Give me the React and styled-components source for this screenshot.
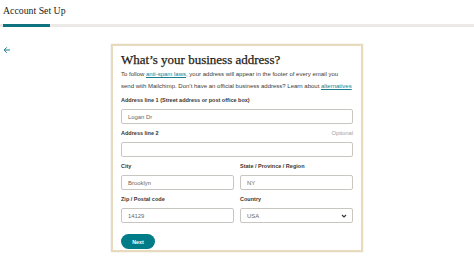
import React from "react";
import styled, { createGlobalStyle } from "styled-components";

const Global = createGlobalStyle`
  html, body { margin: 0; padding: 0; background: #fff; }
  body { font-family: "Liberation Sans", Arial, sans-serif; color: #241c15; }
  * { box-sizing: border-box; }
`;

const Page = styled.div`
  width: 474px;
  height: 257px;
  overflow: hidden;
  display: flex;
  flex-direction: column;
`;

const Header = styled.div`
  height: 24px;
  padding: 5px 0 0 3px;
  font-family: "Liberation Serif", "Times New Roman", serif;
  font-size: 9.8px;
  line-height: 12px;
  color: #241c15;
`;

const Progress = styled.div`
  height: 3px;
  background: #eceae6;
  display: flex;
`;

const ProgressFill = styled.div`
  width: 47px;
  margin-left: 3px;
  height: 100%;
  background: #0f7480;
`;

const Body = styled.div`
  display: flex;
  padding-top: 17px;
`;

const BackCol = styled.div`
  width: 111px;
  padding-left: 3px;
  margin-top: -4px;
  color: #1b7d89;
`;

const Card = styled.div`
  width: 252px;
  height: 208px;
  border: 2px solid #e8dbbd;
  box-shadow: 0 0 1px rgba(180, 160, 120, 0.5);
  padding: 5px 8px 0 8px;
  display: flex;
  flex-direction: column;
`;

const Title = styled.h1`
  margin: 0;
  font-family: "Liberation Serif", "Times New Roman", serif;
  font-weight: 400;
  font-size: 13px;
  line-height: 18px;
  color: #241c15;
  -webkit-text-stroke: 0.25px #241c15;
`;

const Intro = styled.p`
  margin: -1px 0 0;
  font-size: 6px;
  line-height: 12px;
  color: #403b36;
  white-space: nowrap;
`;

const Link = styled.a`
  color: #1b7d89;
  text-decoration: underline;
`;

const Grid = styled.div`
  display: grid;
  grid-template-columns: 1fr 1fr;
  column-gap: 6px;
  row-gap: 4px;
  margin-top: 3px;
`;

const Field = styled.div`
  grid-column: ${(p) => (p.$full ? "1 / span 2" : "auto")};
  display: flex;
  flex-direction: column;
`;

const LabelRow = styled.div`
  display: flex;
  justify-content: space-between;
  align-items: center;
  height: 10px;
  margin-bottom: 4px;
`;

const Label = styled.span`
  font-size: 5.5px;
  font-weight: 700;
  color: #3a352f;
`;

const Optional = styled.span`
  font-size: 5.8px;
  color: #a6a19b;
`;

const Input = styled.div`
  height: 15px;
  border: 1px solid #c9c6c2;
  border-radius: 2px;
  padding: 0 6px;
  display: flex;
  align-items: center;
  justify-content: space-between;
  font-size: 5.9px;
  color: #6d6862;
  background: #fff;
`;

const Chevron = styled.svg`
  width: 6px;
  height: 6px;
  margin-right: -1px;
`;

const Button = styled.button`
  margin-top: 11px;
  flex-shrink: 0;
  width: 34px;
  height: 15px;
  border: none;
  border-radius: 8px;
  background: #007c89;
  color: #fff;
  font-family: "Liberation Sans", Arial, sans-serif;
  font-size: 5.3px;
  font-weight: 700;
  padding: 0;
  align-self: flex-start;
`;

const fields = [
  { label: "Address line 1 (Street address or post office box)", value: "Logan Dr", full: true },
  { label: "Address line 2", value: "", full: true, optional: true },
  { label: "City", value: "Brooklyn" },
  { label: "State / Province / Region", value: "NY" },
  { label: "Zip / Postal code", value: "14129" },
  { label: "Country", value: "USA", select: true },
];

export default function App() {
  return (
    <Page>
      <Global />
      <Header>Account Set Up</Header>
      <Progress>
        <ProgressFill />
      </Progress>
      <Body>
        <BackCol>
          <svg width="8" height="8" viewBox="0 0 8 8" fill="none" stroke="#1b7d89" strokeWidth="1">
            <path d="M7 4H1.2M3.8 1.3L1.1 4l2.7 2.7" />
          </svg>
        </BackCol>
        <Card>
          <Title>What’s your business address?</Title>
          <Intro>
            To follow <Link>anti-spam laws</Link>, your address will appear in the footer of every email you
            <br />
            send with Mailchimp. Don’t have an official business address? Learn about <Link>alternatives</Link>
          </Intro>
          <Grid>
            {fields.map((f) => (
              <Field key={f.label} $full={f.full}>
                <LabelRow>
                  <Label>{f.label}</Label>
                  {f.optional && <Optional>Optional</Optional>}
                </LabelRow>
                <Input>
                  <span>{f.value}</span>
                  {f.select && (
                    <Chevron viewBox="0 0 6 6" fill="none" stroke="#333" strokeWidth="1.1">
                      <path d="M1 2l2 2 2-2" />
                    </Chevron>
                  )}
                </Input>
              </Field>
            ))}
          </Grid>
          <Button>Next</Button>
        </Card>
      </Body>
    </Page>
  );
}
